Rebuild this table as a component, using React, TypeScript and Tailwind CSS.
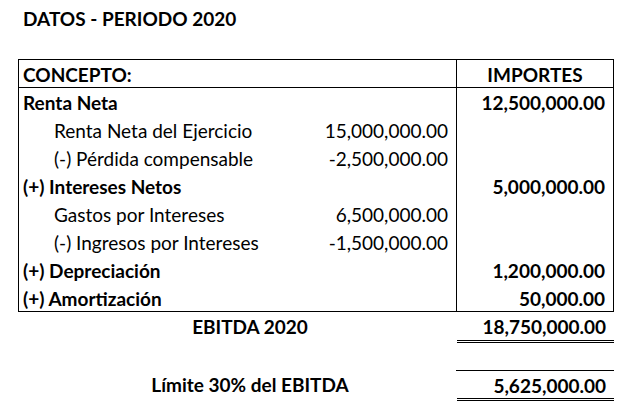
const rows = [
  { label: 'Renta Neta', bold: true, total: '12,500,000.00' },
  { label: 'Renta Neta del Ejercicio', indent: true, sub: '15,000,000.00' },
  { label: '(-) Pérdida compensable', indent: true, sub: '-2,500,000.00' },
  { label: '(+) Intereses Netos', bold: true, total: '5,000,000.00' },
  { label: 'Gastos por Intereses', indent: true, sub: '6,500,000.00' },
  { label: '(-) Ingresos por Intereses', indent: true, sub: '-1,500,000.00' },
  { label: '(+) Depreciación', bold: true, total: '1,200,000.00' },
  { label: '(+) Amortización', bold: true, total: '50,000.00' },
]

export default function App() {
  return (
    <div className="w-[628px] h-[420px] bg-white text-black font-['Lato',sans-serif] text-[19px]">
      {/* Title */}
      <div className="h-[59px] pl-[23px] pt-[7px] font-bold leading-[24px]">DATOS - PERIODO 2020</div>

      {/* Table */}
      <div className="ml-[18px] w-[596px] border border-black">
        <div className="flex h-[28px] border-b border-black font-bold leading-[30px]">
          <div className="w-[437px] pl-[4px]">CONCEPTO:</div>
          <div className="flex-1 border-l border-black text-center">IMPORTES</div>
        </div>
        {rows.map((r, i) => (
          <div key={i} className={`flex leading-[30px] ${i === rows.length - 1 ? 'h-[27px]' : 'h-[28px]'}`}>
            <div className="w-[437px] flex pr-[8px]">
              <span className={r.bold ? 'font-bold pl-[4px]' : 'pl-[35px]'}>{r.label}</span>
              <span className="ml-auto">{r.sub}</span>
            </div>
            <div className="flex-1 border-l border-black text-right pr-[8px] font-bold">{r.total}</div>
          </div>
        ))}
      </div>

      {/* EBITDA */}
      <div className="flex ml-[18px] h-[31px] font-bold leading-[30px]">
        <div className="w-[438px] pl-[26px] text-center">EBITDA 2020</div>
        <div className="w-[157px] ml-[1px] border-b-[3px] border-double border-black text-right pr-[8px]">18,750,000.00</div>
      </div>

      <div className="h-[27px]" />

      {/* Limite */}
      <div className="flex ml-[18px] h-[31px] font-bold leading-[30px]">
        <div className="w-[438px] pl-[26px] text-center">Límite 30% del EBITDA</div>
        <div className="w-[158px] border-t border-black">
          <div className="ml-[1px] border-b-[3px] border-double border-black text-right pr-[8px] h-[30px]">5,625,000.00</div>
        </div>
      </div>
    </div>
  )
}
